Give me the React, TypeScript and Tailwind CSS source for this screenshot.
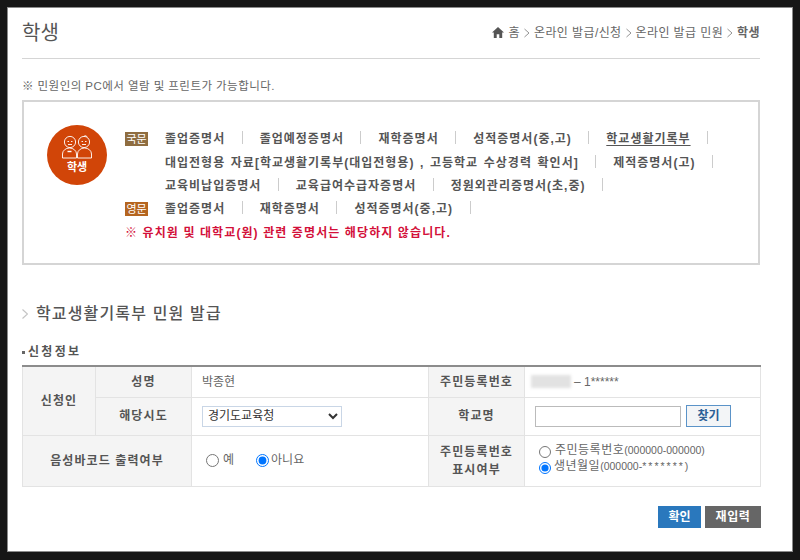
const FONT = "font-['Liberation_Sans','Noto_Sans_CJK_KR',sans-serif]";

function Sep() {
  return <span className="ml-[16.5px] mr-[17px] mt-[-3px] h-[13px] w-px bg-[#ccc]" />;
}

function DocLine({ items, badge }: { items: string[]; badge?: { label: string; color: string } }) {
  return (
    <div className="flex h-[23.4px] items-center">
      <div className="w-[40px] shrink-0">
        {badge && (
          <span className={`flex h-[14px] w-[23px] items-center justify-center text-[11px] font-normal leading-none tracking-normal text-white ${badge.color}`}>
            {badge.label}
          </span>
        )}
      </div>
      {items.map((t) => (
        <div key={t} className="flex items-center">
          <span className={t === "학교생활기록부" ? "whitespace-pre underline underline-offset-2" : "whitespace-pre [word-spacing:1.3px]"}>{t}</span>
          <Sep />
        </div>
      ))}
    </div>
  );
}

export default function App() {
  const th = "border border-[#e3e3e3] bg-[#f4f4f4] text-center text-[12px] font-bold tracking-[1.1px] text-[#555]";
  const td = "border border-[#e3e3e3] text-[12px] text-[#666]";

  return (
    <div className={`h-[560px] w-[800px] bg-[#161616] pb-[8px] pl-[7px] pr-[7px] pt-[7px] ${FONT}`}>
      <div className="h-[545px] border border-[#8a8a8a] bg-white px-[14px]">
        {/* page title + breadcrumb */}
        <div className="flex h-[51px] w-[738px] items-center justify-between border-b border-[#d5d5d5] pb-[1px]">
          <h1 className="text-[20px] font-normal text-[#555]">학생</h1>
          <div className="flex items-center gap-[4px] text-[12px] tracking-[0.4px] text-[#666]">
            <svg width="12" height="11" viewBox="0 0 12 11" className="mr-[1px]">
              <path d="M6 0 L12 5.6 H10.2 V11 H7.3 V7.2 H4.7 V11 H1.8 V5.6 H0 Z" fill="#555" />
            </svg>
            <span>홈</span>
            <Chevron />
            <span>온라인 발급/신청</span>
            <Chevron />
            <span>온라인 발급 민원</span>
            <Chevron />
            <span className="font-bold">학생</span>
          </div>
        </div>

        <p className="mt-[19px] text-[11.5px] leading-[16px] tracking-[0.45px] text-[#666]">※ 민원인의 PC에서 열람 및 프린트가 가능합니다.</p>

        {/* certificate list */}
        <div className="mt-[6px] flex h-[165px] w-[738px] border-[2px] border-[#d5d5d5] pl-[23px] pt-[23px]">
          <div className="flex h-[60px] w-[60px] shrink-0 flex-col items-center rounded-full bg-[#d14508] pt-[10px]">
            <svg width="32" height="24" viewBox="0 0 32 24" fill="none" stroke="#fff" strokeWidth="0.9">
              <circle cx="9" cy="7" r="5.6" />
              <circle cx="23" cy="7" r="5.6" />
              <path d="M6.500 6.500h1.500M10 6.500h1.500M7 9.500h4M20.500 6.500H22M24 6.500h1.500M21 9.500h4M23 1.400c1-1 2.500-1 3 .5" />
              <path d="M1.500 23V19a7 6 0 0 1 14 0v4Z" />
              <path d="M16.500 23V19a7 6 0 0 1 14 0v4Z" />
              <path d="M6.500 16.500h4" strokeWidth="1.400" />
            </svg>
            <span className="mt-[1px] text-[11px] font-bold leading-[14px] text-white">학생</span>
          </div>
          <div className="ml-[18px] mt-[2.5px] text-[12px] font-bold tracking-[1px] text-[#555]">
            <DocLine badge={{ label: "국문", color: "bg-[#8f6d40]" }} items={["졸업증명서", "졸업예정증명서", "재학증명서", "성적증명서(중,고)", "학교생활기록부"]} />
            <DocLine items={["대입전형용 자료[학교생활기록부(대입전형용) , 고등학교 수상경력 확인서]", "제적증명서(고)"]} />
            <DocLine items={["교육비납입증명서", "교육급여수급자증명서", "정원외관리증명서(초,중)"]} />
            <DocLine badge={{ label: "영문", color: "bg-[#b5651f]" }} items={["졸업증명서", "재학증명서", "성적증명서(중,고)"]} />
            <div className="flex h-[23.4px] items-center tracking-[1.1px] text-[#d3103a]">※ 유치원 및 대학교(원) 관련 증명서는 해당하지 않습니다.</div>
          </div>
        </div>

        {/* section heading */}
        <div className="mt-[39px] flex items-center gap-[8px]">
          <svg width="6" height="10" viewBox="0 0 6 10" fill="none" stroke="#c4c4c4" strokeWidth="1.2">
            <path d="M0.5 0.5 L5.500 5 L0.5 9.500" />
          </svg>
          <h2 className="text-[16px] font-medium leading-[20px] tracking-[1.15px] text-[#555]">학교생활기록부 민원 발급</h2>
        </div>

        <div className="mt-[20px] flex items-center gap-[3px] text-[12px] font-bold leading-[16px] tracking-[2.3px] text-[#555]">
          <span className="h-[3px] w-[3px] bg-[#666]" />
          신청정보
        </div>

        <table className="mt-[5px] w-[738px] table-fixed border-collapse border-t-[2px] border-t-[#8c8c8c]">
          <colgroup>
            <col className="w-[73px]" />
            <col className="w-[96px]" />
            <col className="w-[237px]" />
            <col className="w-[96px]" />
            <col className="w-[236px]" />
          </colgroup>
          <tbody>
            <tr className="h-[31px]">
              <th rowSpan={2} className={th}>신청인</th>
              <th className={th}>성명</th>
              <td className={`${td} pl-[10px]`}>박종현</td>
              <th className={th}>주민등록번호</th>
              <td className={`${td} pl-[6px]`}>
                <div className="flex items-center gap-[3px]">
                  <span className="h-[13px] w-[40px] bg-[#e2e2e2] blur-[1.5px]" />
                  <span className="whitespace-pre">– 1******</span>
                </div>
              </td>
            </tr>
            <tr className="h-[38px]">
              <th className={th}>해당시도</th>
              <td className={`${td} pl-[10px]`}>
                <select defaultValue="경기도교육청" className="h-[21px] w-[140px] appearance-auto rounded-none border border-[#c9d6e6] bg-white pl-[1px] text-[12px] text-[#333]">
                  <option>경기도교육청</option>
                </select>
              </td>
              <th className={th}>학교명</th>
              <td className={`${td} pl-[10px]`}>
                <div className="flex items-center gap-[5px]">
                  <input className="h-[21px] w-[146px] border border-[#bbb] bg-white" />
                  <button className="h-[22px] w-[45px] border border-[#5b93c8] bg-[#f3f5f7] text-[12px] font-bold text-[#2b5f96]">찾기</button>
                </div>
              </td>
            </tr>
            <tr className="h-[51px]">
              <th colSpan={2} className={th}>음성바코드 출력여부</th>
              <td className={`${td} pl-[14px]`}>
                <div className="flex items-center">
                  <input type="radio" name="bar" className="m-0 h-[13px] w-[13px]" />
                  <span className="ml-[4px] mt-[-1px]">예</span>
                  <input type="radio" name="bar" defaultChecked className="m-0 ml-[22px] h-[13px] w-[13px]" />
                  <span className="ml-[2px] mt-[-1px]">아니요</span>
                </div>
              </td>
              <th className={`${th} leading-[18px]`}>주민등록번호<br />표시여부</th>
              <td className={`${td} pl-[14px]`}>
                <div className="flex items-center leading-[17px]">
                  <input type="radio" name="ssn" className="m-0 h-[12px] w-[12px]" />
                  <span className="ml-[4px] mt-[-3px] tracking-[0.5px]">주민등록번호<span className="text-[10.5px] tracking-normal">(000000-000000)</span></span>
                </div>
                <div className="flex items-center leading-[19px]">
                  <input type="radio" name="ssn" defaultChecked className="m-0 h-[12px] w-[12px]" />
                  <span className="ml-[3px] mt-[-2px] tracking-[0.5px]">생년월일<span className="text-[10.5px] tracking-normal">(000000-<span className="tracking-[2px]">*******</span>)</span></span>
                </div>
              </td>
            </tr>
          </tbody>
        </table>

        <div className="mt-[19px] flex w-[739px] justify-end gap-[4px]">
          <button className="h-[22px] w-[43px] bg-[#2a78bd] text-[12px] font-bold text-white">확인</button>
          <button className="h-[22px] w-[56px] bg-[#666] text-[12px] font-bold tracking-[0.6px] text-white">재입력</button>
        </div>
      </div>
    </div>
  );
}

function Chevron() {
  return (
    <svg width="6" height="10" viewBox="0 0 6 10" fill="none" stroke="#888" strokeWidth="0.9">
      <path d="M0.5 1 L5 5 L0.5 9" />
    </svg>
  );
}
